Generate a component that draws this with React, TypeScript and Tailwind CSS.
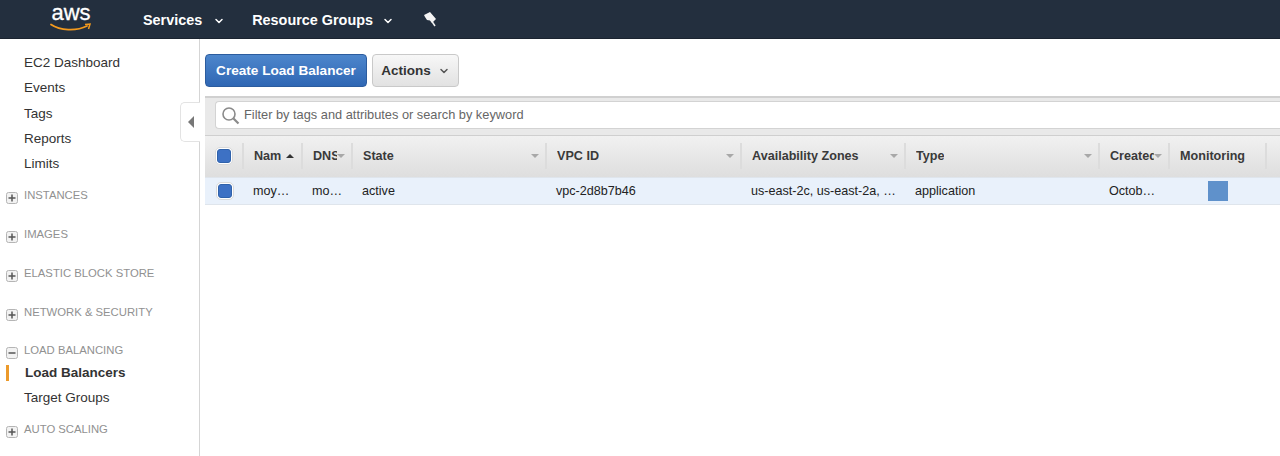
import { ChevronDown } from "lucide-react";

const FONT = "[font-family:'Liberation_Sans',Arial,sans-serif]";

const COLS = "grid grid-cols-[39px_59px_50px_194px_195px_164px_194px_70px_97px_13px]";

const PlusBox = ({ minus = false }: { minus?: boolean }) => (
  <svg width="12" height="12" viewBox="0 0 12 12" className="shrink-0">
    <rect x="0.5" y="0.5" width="11" height="11" rx="2" fill="#f2f2f2" stroke="#b5b5b5" />
    <rect x="2.5" y="5.25" width="7" height="1.5" fill="#555" />
    {!minus && <rect x="5.25" y="2.5" width="1.5" height="7" fill="#555" />}
  </svg>
);

const Caret = ({ up = false, dark = false }: { up?: boolean; dark?: boolean }) => (
  <svg width="8" height="4" viewBox="0 0 8 4" className="shrink-0">
    <path d={up ? "M4 0 8 4H0z" : "M0 0h8L4 4z"} fill={dark ? "#333" : "#a8a8a8"} />
  </svg>
);

const Check = () => (
  <span className="flex h-[18px] w-[18px] items-center justify-center rounded-[5px] border border-[#d9d9d9] bg-white">
    <span className="h-3.5 w-3.5 rounded-[3px] border border-[#2f62ab] bg-[#3d71c4]" />
  </span>
);

const Section = ({ label, minus, className }: { label: string; minus?: boolean; className: string }) => (
  <div className={`flex items-center gap-[6px] pl-[6px] text-[11.3px] text-[#919191] ${className}`}>
    <span className="mt-[5px]">
      <PlusBox minus={minus} />
    </span>
    <span>{label}</span>
  </div>
);

const HeadCell = ({ label, caret, up }: { label: string; caret?: boolean; up?: boolean }) => (
  <div className="my-[7px] flex h-[26px] min-w-0 items-center justify-between overflow-hidden border-r-2 border-[#dcdcdc] pl-[10px] pr-[6px]">
    <span className="min-w-0 overflow-hidden whitespace-nowrap">{label}</span>
    {caret && <span className={up ? "ml-1 mr-[1px]" : ""}><Caret up={up} dark={up} /></span>}
  </div>
);

const BodyCell = ({ text }: { text: string }) => (
  <div className="min-w-0 overflow-hidden text-ellipsis whitespace-nowrap pl-[9px] pr-2">{text}</div>
);

export default function App() {
  return (
    <div className={`flex h-[456px] w-[1280px] flex-col overflow-hidden bg-white ${FONT}`}>
      <header className="flex h-[39px] shrink-0 items-center border-b border-[#1b2430] bg-[#232f3e] text-[14.4px] font-bold text-white">
        <svg width="44" height="34" viewBox="0 0 44 34" className="ml-[49px] mt-[-3px]">
          <text x="2.5" y="19" fontSize="22" fontWeight="400" stroke="#fff" strokeWidth="0.3" fill="#fff" fontFamily="'Liberation Sans', sans-serif">aws</text>
          <path d="M2 23.5c9 6 25 7 36 1.5" fill="none" stroke="#f39a1e" strokeWidth="1.8" strokeLinecap="round" />
          <path d="M36 23.5l5-.5-1.5 5" fill="none" stroke="#f39a1e" strokeWidth="1.5" />
        </svg>
        <div className="flex items-center pt-[4px]">
          <span className="ml-[50px]">Services</span>
          <ChevronDown size={12} strokeWidth={3} className="ml-[11px]" />
          <span className="ml-[27px]">Resource Groups</span>
          <ChevronDown size={12} strokeWidth={3} className="ml-[9px]" />
          <svg width="16" height="16" viewBox="0 0 16 16" className="ml-[28px] mt-[-3px]">
            <path d="M2 4l6-3 6 7-4 4-2-2.5-3-.5-2-3z" fill="#f4f4f4" />
            <path d="M9 9l4 6" stroke="#f4f4f4" strokeWidth="1.5" />
          </svg>
        </div>
      </header>

      <div className="relative flex min-h-0 flex-1">
        <aside className="w-[200px] shrink-0 border-r border-[#d5d5d5] pt-[11px] text-[13.5px] text-[#333]">
          <div className="flex flex-col pl-6 leading-[25.3px]">
            <span>EC2 Dashboard</span>
            <span>Events</span>
            <span>Tags</span>
            <span>Reports</span>
            <span>Limits</span>
          </div>
          <Section label="INSTANCES" className="mt-[10px] h-[18px]" />
          <Section label="IMAGES" className="mt-[21px] h-[18px]" />
          <Section label="ELASTIC BLOCK STORE" className="mt-[21px] h-[18px]" />
          <Section label="NETWORK & SECURITY" className="mt-[21px] h-[18px]" />
          <Section label="LOAD BALANCING" minus className="mt-[20px] h-[18px]" />
          <div className="mt-[1px] flex h-[25px] items-center font-bold">
            <span className="ml-[6px] h-4 w-[3px] bg-[#ec9a2b]" />
            <span className="ml-4">Load Balancers</span>
          </div>
          <div className="flex h-[25px] items-center pl-6">Target Groups</div>
          <Section label="AUTO SCALING" className="mt-[10px] h-[18px]" />
        </aside>

        <button className="absolute left-[180px] top-[63px] flex h-[40px] w-[20px] items-center justify-center rounded-l-[5px] border border-r-0 border-[#e3e3e3] bg-white">
          <svg width="6" height="12" viewBox="0 0 6 12">
            <path d="M6 0v12L0 6z" fill="#777" />
          </svg>
        </button>

        <main className="min-w-0 flex-1 pl-[5px] text-[12.6px] text-[#222]">
          <div className="flex h-[57px] items-start gap-[5px] pt-[15px]">
            <button className="h-[33px] w-[162px] rounded-[4px] border border-[#2c5c9e] bg-gradient-to-b from-[#4d86cc] to-[#2f67b4] pt-[1px] text-[13.6px] font-bold text-white">
              Create Load Balancer
            </button>
            <button className="flex h-[33px] w-[87px] items-center justify-center gap-[7px] rounded-[4px] border border-[#c9c9c9] bg-gradient-to-b from-[#f7f7f7] to-[#e2e2e2] pt-[1px] text-[13.5px] font-bold text-[#333]">
              Actions
              <ChevronDown size={12} strokeWidth={3} className="text-[#555]" />
            </button>
          </div>

          <div className="h-[40px] border-t-2 border-[#d0d0d0] bg-[#e9e9e9] pl-[10px] pt-[3px]">
            <div className="flex h-[28px] items-center rounded-l-[4px] border border-r-0 border-[#d3d3d3] bg-white pl-[5px] text-[12.8px] text-[#666]">
              <svg width="19" height="19" viewBox="0 0 19 19" fill="none" stroke="#8a8a8a">
                <circle cx="8" cy="8" r="6" strokeWidth="1.6" />
                <path d="M12.5 12.5l5 5" strokeWidth="2.2" />
              </svg>
              <span className="ml-[4px]">Filter by tags and attributes or search by keyword</span>
            </div>
          </div>

          <div className={`${COLS} -mt-[1px] h-[42px] border-t border-[#cfcfcf] bg-gradient-to-b from-[#f1f1f1] to-[#dedede] text-[12.6px] font-bold text-[#3a3a3a]`}>
            <div className="my-[7px] flex h-[26px] items-center justify-center border-r-2 border-[#dcdcdc] pl-[1px]">
              <Check />
            </div>
            <HeadCell label="Nam" caret up />
            <div className="my-[7px] flex h-[26px] min-w-0 items-center border-r-2 border-[#dcdcdc] pl-[10px]">
              <span className="w-[24px] overflow-hidden whitespace-nowrap">DNS name</span>
              <Caret />
            </div>
            <HeadCell label="State" caret />
            <HeadCell label="VPC ID" caret />
            <HeadCell label="Availability Zones" caret />
            <HeadCell label="Type" caret />
            <div className="my-[7px] flex h-[26px] min-w-0 items-center border-r-2 border-[#dcdcdc] pl-[10px]">
              <span className="w-[44px] overflow-hidden whitespace-nowrap">Created</span>
              <Caret />
            </div>
            <HeadCell label="Monitoring" />
            <div />
          </div>

          <div className={`${COLS} h-[28px] items-center border-b border-t border-[#dfe5ec] bg-[#e9f1fb] text-[12.6px] text-[#222]`}>
            <div className="flex justify-center">
              <Check />
            </div>
            <BodyCell text="moyeecoffee" />
            <BodyCell text="moyee-dns" />
            <BodyCell text="active" />
            <BodyCell text="vpc-2d8b7b46" />
            <BodyCell text="us-east-2c, us-east-2a, us-east-2b" />
            <BodyCell text="application" />
            <BodyCell text="October 10, 2017" />
            <div className="flex justify-center pr-[2px]">
              <span className="h-5 w-5 bg-[#5f91cb]" />
            </div>
            <div />
          </div>
        </main>
      </div>
    </div>
  );
}
